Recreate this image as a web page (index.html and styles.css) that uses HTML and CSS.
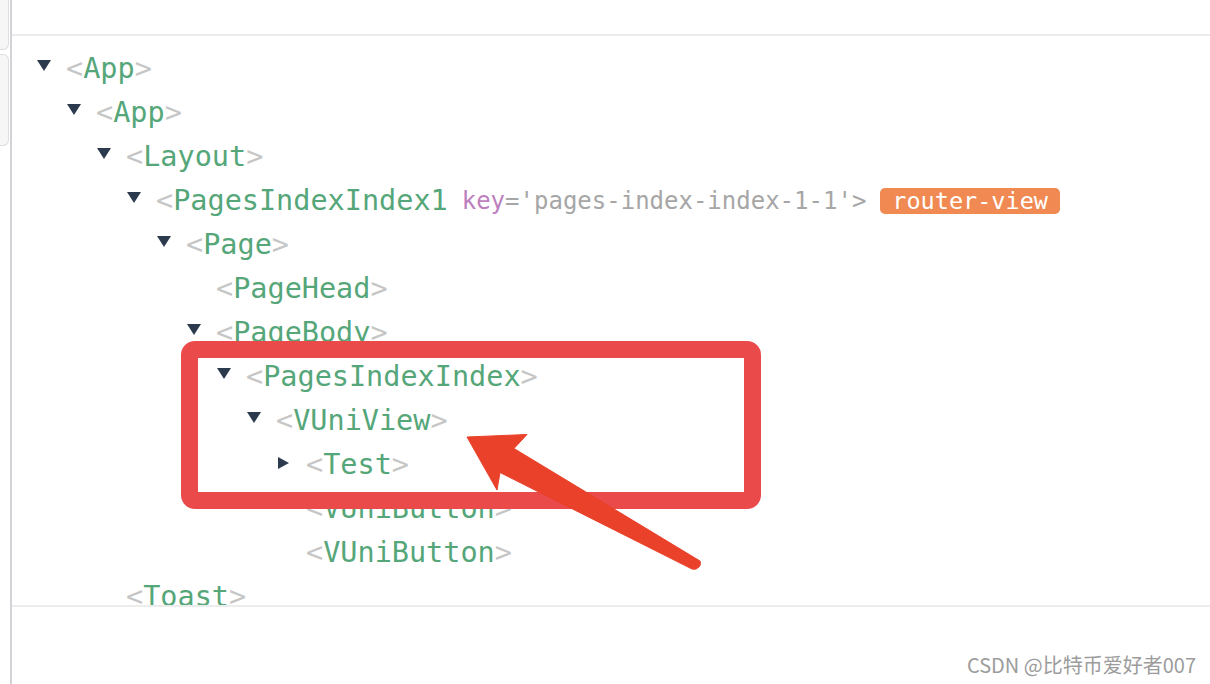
FILE: index.html
```html
<!DOCTYPE html>
<html>
<head>
<meta charset="utf-8">
<title>Vue Devtools tree</title>
<link rel="stylesheet" href="styles.css">
</head>
<body>
<div class="app">
  <div class="gutter">
    <div class="tab tab1"></div>
    <div class="tab tab2"></div>
  </div>
  <div class="main">
    <div class="toolbar"></div>
    <div class="tree">
      <div class="row l0"><span class="toggle"><i class="tri-down"></i></span><span class="br">&lt;</span><span class="name">App</span><span class="br">&gt;</span></div>
      <div class="row l1"><span class="toggle"><i class="tri-down"></i></span><span class="br">&lt;</span><span class="name">App</span><span class="br">&gt;</span></div>
      <div class="row l2"><span class="toggle"><i class="tri-down"></i></span><span class="br">&lt;</span><span class="name">Layout</span><span class="br">&gt;</span></div>
      <div class="row l3"><span class="toggle"><i class="tri-down"></i></span><span class="br">&lt;</span><span class="name">PagesIndexIndex1</span><span class="attrs"><span class="attr-key">key</span>=<span class="attr-val">'pages-index-index-1-1'</span>&gt;</span><span class="badge">router-view</span></div>
      <div class="row l4"><span class="toggle"><i class="tri-down"></i></span><span class="br">&lt;</span><span class="name">Page</span><span class="br">&gt;</span></div>
      <div class="row l5"><span class="toggle"></span><span class="br">&lt;</span><span class="name">PageHead</span><span class="br">&gt;</span></div>
      <div class="row l5"><span class="toggle"><i class="tri-down"></i></span><span class="br">&lt;</span><span class="name">PageBody</span><span class="br">&gt;</span></div>
      <div class="row l6"><span class="toggle"><i class="tri-down"></i></span><span class="br">&lt;</span><span class="name">PagesIndexIndex</span><span class="br">&gt;</span></div>
      <div class="row l7"><span class="toggle"><i class="tri-down"></i></span><span class="br">&lt;</span><span class="name">VUniView</span><span class="br">&gt;</span></div>
      <div class="row l8"><span class="toggle"><i class="tri-right"></i></span><span class="br">&lt;</span><span class="name">Test</span><span class="br">&gt;</span></div>
      <div class="row l8"><span class="toggle"></span><span class="br">&lt;</span><span class="name">VUniButton</span><span class="br">&gt;</span></div>
      <div class="row l8"><span class="toggle"></span><span class="br">&lt;</span><span class="name">VUniButton</span><span class="br">&gt;</span></div>
      <div class="row l2"><span class="toggle"></span><span class="br">&lt;</span><span class="name">Toast</span><span class="br">&gt;</span></div>
    </div>
    <div class="footer">
      <span class="watermark">CSDN @比特币爱好者007</span>
    </div>
  </div>
  <div class="highlight"></div>
  <svg class="arrow" width="1210" height="684" viewBox="0 0 1210 684">
    <path d="M467 437 L527 434.5 L514 448.5 L700 561 Q702 566 696 569 Q693 570 690 568 L500 472.5 L497 490 Z" fill="#e9412a" stroke="#e9412a" stroke-width="1" stroke-linejoin="round"/>
  </svg>
</div>
</body>
</html>
```

FILE: styles.css
```css
html, body {
  margin: 0;
  padding: 0;
  background: #ffffff;
}

.app {
  position: relative;
  width: 1210px;
  height: 684px;
  display: flex;
  overflow: hidden;
  font-family: "DejaVu Sans Mono", "Liberation Mono", monospace;
}

.gutter {
  width: 10px;
  flex: none;
  display: flex;
  flex-direction: column;
  gap: 4px;
  border-right: 2px solid #d3d3d7;
}

.tab {
  width: 8px;
  background: #f6f6f6;
  border: 1px solid #dedede;
  border-left: none;
}

.tab1 {
  height: 49px;
  border-top: none;
  border-radius: 0 0 6px 0;
}

.tab2 {
  height: 90px;
  border-radius: 0 6px 6px 0;
}

.main {
  flex: 1;
  display: flex;
  flex-direction: column;
  min-width: 0;
}

.toolbar {
  height: 34px;
  flex: none;
  border-bottom: 2px solid #ececec;
}

.tree {
  height: 558px;
  flex: none;
  overflow: hidden;
  padding-top: 11px;
}

.row {
  height: 44px;
  display: flex;
  align-items: center;
  font-size: 28.5px;
  line-height: 44px;
  white-space: nowrap;
}

.l0 { padding-left: 25px; }
.l1 { padding-left: 55px; }
.l2 { padding-left: 85px; }
.l3 { padding-left: 115px; }
.l4 { padding-left: 145px; }
.l5 { padding-left: 175px; }
.l6 { padding-left: 205px; }
.l7 { padding-left: 235px; }
.l8 { padding-left: 265px; }

.toggle {
  width: 29px;
  flex: none;
  display: flex;
  align-items: center;
}

.tri-down {
  display: block;
  width: 0;
  height: 0;
  border-left: 7.5px solid transparent;
  border-right: 7.5px solid transparent;
  border-top: 11px solid #2c3a4d;
  margin-bottom: 7px;
}

.tri-right {
  display: block;
  width: 0;
  height: 0;
  border-top: 6.5px solid transparent;
  border-bottom: 6.5px solid transparent;
  border-left: 11px solid #2c3a4d;
  margin-left: 1px;
  margin-bottom: 4px;
}

.br {
  color: #c6c6c6;
}

.name {
  color: #55a679;
}

.attrs {
  font-size: 24px;
  color: #a6a6a6;
  margin-left: 14px;
}

.attr-key {
  color: #bd7fbe;
}

.attr-val {
  color: #a6a6a6;
}

.badge {
  margin-left: 14px;
  background: #f08a52;
  color: #ffffff;
  font-size: 23.5px;
  line-height: 26px;
  height: 26px;
  padding: 0 12px;
  border-radius: 5px;
}

.footer {
  flex: 1;
  border-top: 2px solid #ececec;
  display: flex;
  justify-content: flex-end;
  align-items: flex-end;
  padding: 0 14px 5px 0;
}

.watermark {
  font-family: "Noto Sans CJK SC", "Noto Sans", sans-serif;
  font-size: 20px;
  line-height: 28px;
  color: #9c9c9c;
}

.highlight {
  position: absolute;
  left: 181px;
  top: 341px;
  width: 546px;
  height: 134px;
  border: 17px solid #eb4a4b;
  border-radius: 14px;
}

.arrow {
  position: absolute;
  left: 0;
  top: 0;
  pointer-events: none;
}
```
